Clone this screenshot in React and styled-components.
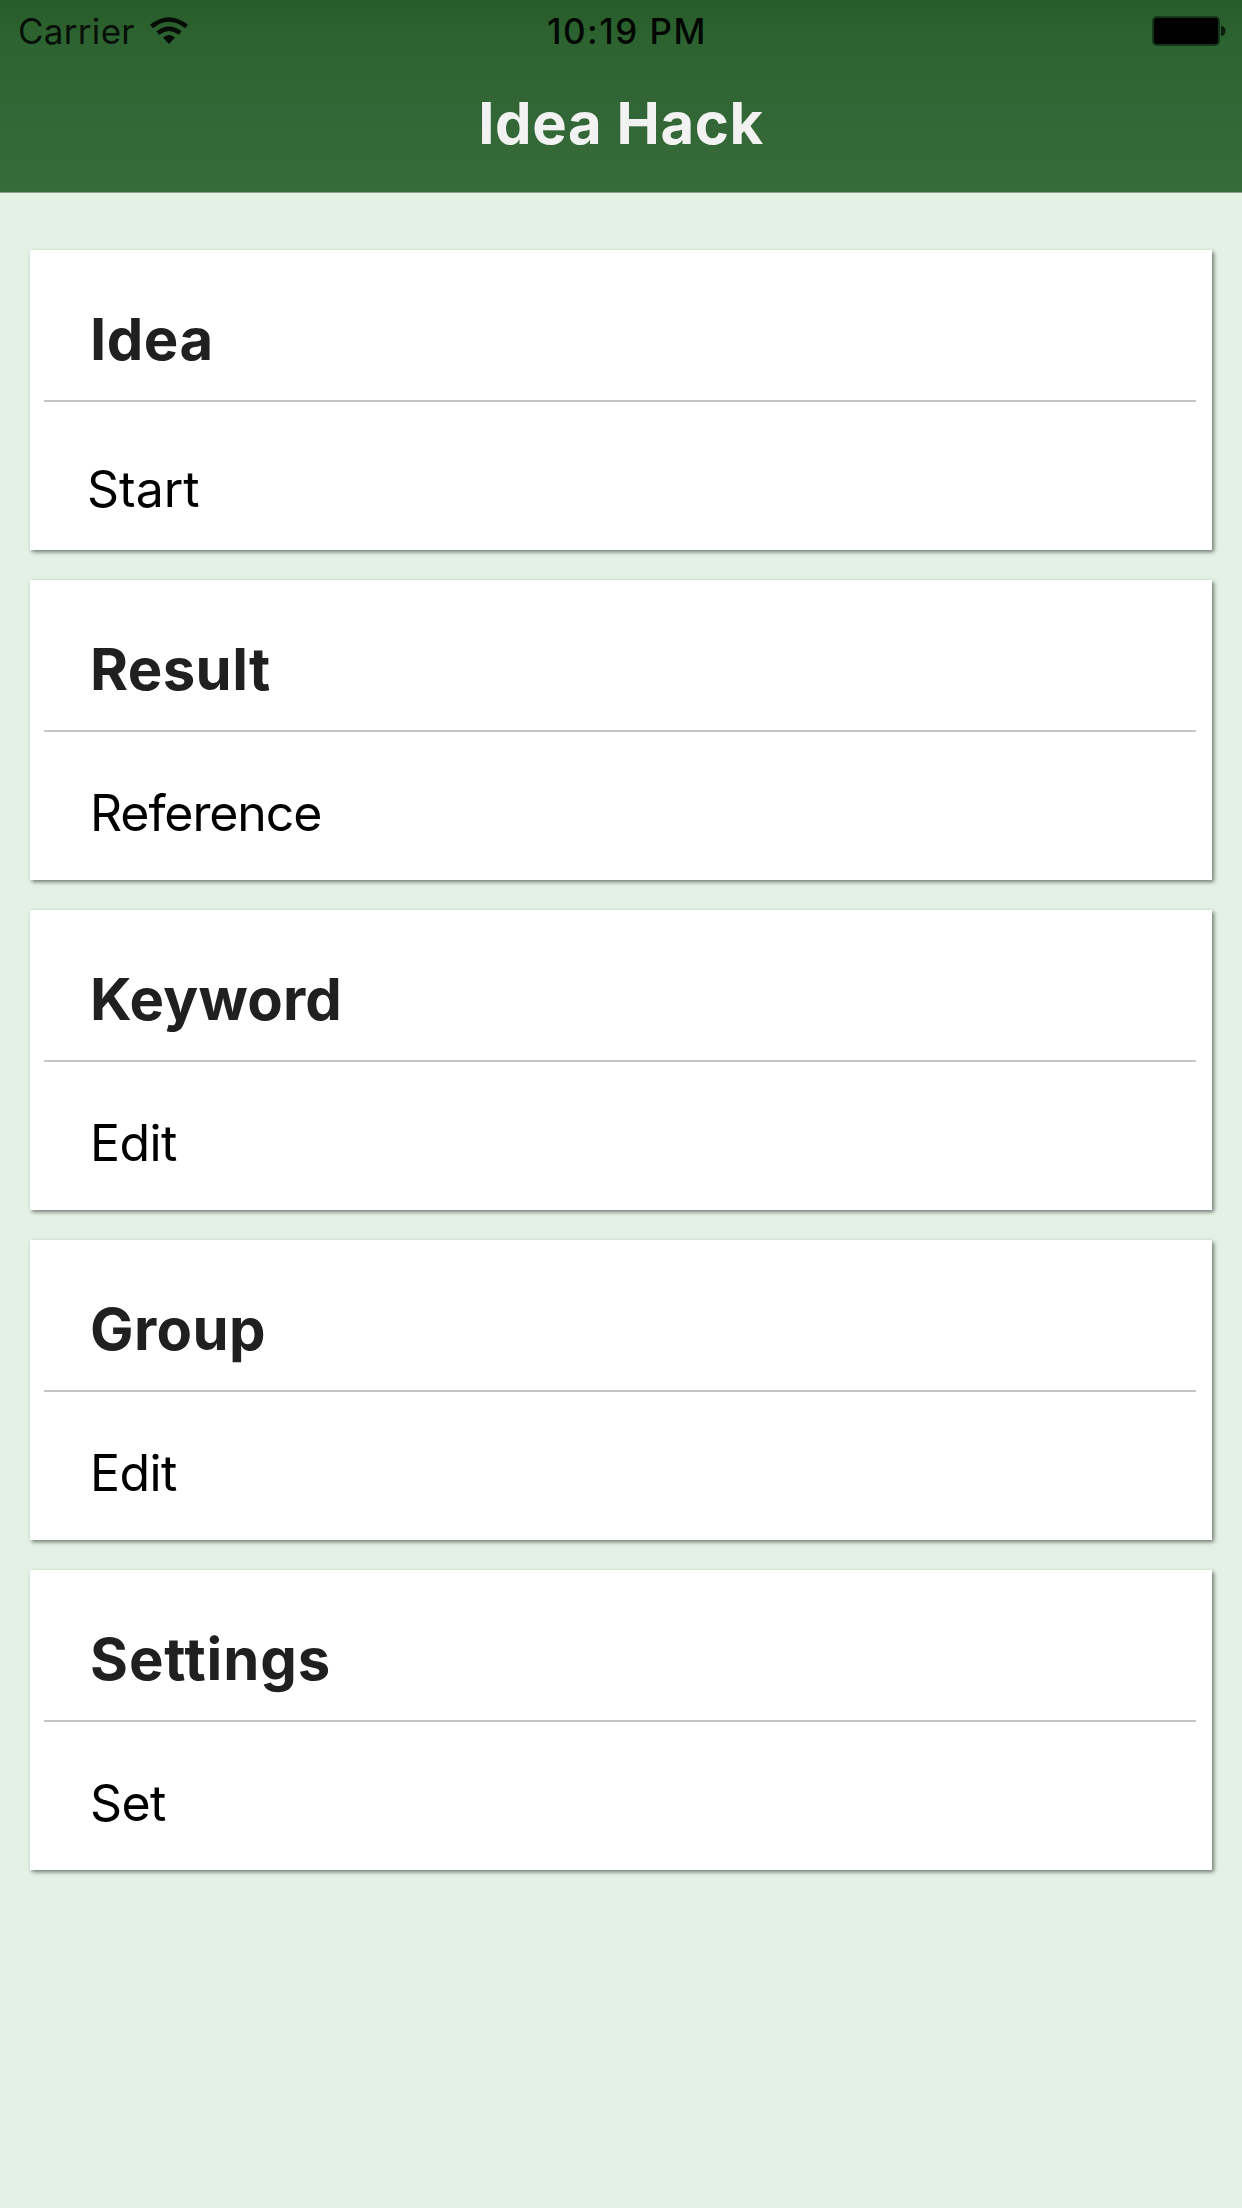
import styled, { createGlobalStyle } from 'styled-components'

const GlobalStyle = createGlobalStyle`
    * {
        box-sizing: border-box;
    }
    body {
        margin: 0;
        background-color: #e3f2e5;
        font-family: Inter, 'Liberation Sans', sans-serif;
    }
`

const Screen = styled.div`
    min-height: 2208px;
    background-color: #e3f2e5;
`

const Header = styled.header`
    height: 193px;
    background: linear-gradient(#285c2a 0, #2d6330 40px, #336636 110px, #366c39 192px);
    border-bottom: 1px solid #8c9c8d;
`

const StatusBar = styled.div`
    display: grid;
    grid-template-columns: 1fr auto 1fr;
    align-items: center;
    height: 62px;
    padding: 0 16px 0 18px;
    color: #071008;
`

const Network = styled.div`
    display: flex;
    align-items: center;
    gap: 15px;
`

const Carrier = styled.span`
    font-size: 35px;
    letter-spacing: 0.3px;
`

const Time = styled.span`
    padding-left: 10px;
    font-size: 35px;
    font-weight: 500;
    letter-spacing: 1.5px;
    color: #030703;
`

const Battery = styled.div`
    display: flex;
    justify-content: flex-end;
`

const NavTitle = styled.h1`
    margin: 0;
    font-size: 58px;
    font-weight: 700;
    line-height: 122px;
    letter-spacing: 0.6px;
    text-align: center;
    color: #f2f2f2;
`

const CardList = styled.main`
    display: flex;
    flex-direction: column;
    gap: 30px;
    padding: 57px 30px 0;
`

const Card = styled.section`
    height: 300px;
    padding: 0 16px 0 14px;
    background-color: white;
    box-shadow: 2px 2px 4px rgba(0, 0, 0, 0.5);
`

const CardTitle = styled.h2`
    height: 152px;
    margin: 0;
    padding: 28px 0 0 46px;
    border-bottom: 2px solid #c4c4c4;
    font-size: 58px;
    font-weight: 700;
    line-height: 122px;
    letter-spacing: ${({ $tracking }) => $tracking}px;
    color: #202020;
`

const CardItem = styled.div`
    padding: ${({ $low }) => ($low ? '20px 0 0 43px' : '14px 0 0 46px')};
    font-size: 50px;
    line-height: 134px;
    letter-spacing: ${({ $tracking }) => $tracking}px;
    color: black;
`

const WifiIcon = () => (
    <svg width="38" height="28" viewBox="0 0 38 28" fill="none" stroke="#050b05">
        <path d="M1.5 9.5 Q19 -4.5 36.5 9.5" strokeWidth="4.6" />
        <path d="M7.8 16 Q19 7.5 30.2 16" strokeWidth="4.6" />
        <path d="M13 20.5 Q19 15.5 25 20.5 L19 27 Z" fill="#050b05" stroke="none" />
    </svg>
)

const BatteryIcon = () => (
    <svg width="74" height="30" viewBox="0 0 74 30">
        <rect x="1" y="1" width="66" height="28" rx="4" fill="#000" stroke="#14361a" strokeWidth="2" />
        <path d="M69 10 Q73.5 10.5 73.5 15 Q73.5 19.5 69 20 Z" fill="#0a1c0c" />
    </svg>
)

const cards = [
    { title: 'Idea', titleTracking: 0.5, item: 'Start', itemTracking: 0, low: true },
    { title: 'Result', titleTracking: 0.4, item: 'Reference', itemTracking: -1.1 },
    { title: 'Keyword', titleTracking: 0.2, item: 'Edit', itemTracking: -0.6 },
    { title: 'Group', titleTracking: 0.4, item: 'Edit', itemTracking: -0.6 },
    { title: 'Settings', titleTracking: 0.9, item: 'Set', itemTracking: -0.6 },
]

const App = () => {
    return (
        <Screen>
            <GlobalStyle />
            <Header>
                <StatusBar>
                    <Network>
                        <Carrier>Carrier</Carrier>
                        <WifiIcon />
                    </Network>
                    <Time>10:19 PM</Time>
                    <Battery><BatteryIcon /></Battery>
                </StatusBar>
                <NavTitle>Idea Hack</NavTitle>
            </Header>
            <CardList>
                {cards.map(({ title, titleTracking, item, itemTracking, low }) => (
                    <Card key={title}>
                        <CardTitle $tracking={titleTracking}>{title}</CardTitle>
                        <CardItem $low={low} $tracking={itemTracking}>{item}</CardItem>
                    </Card>
                ))}
            </CardList>
        </Screen>
    )
}

export default App
